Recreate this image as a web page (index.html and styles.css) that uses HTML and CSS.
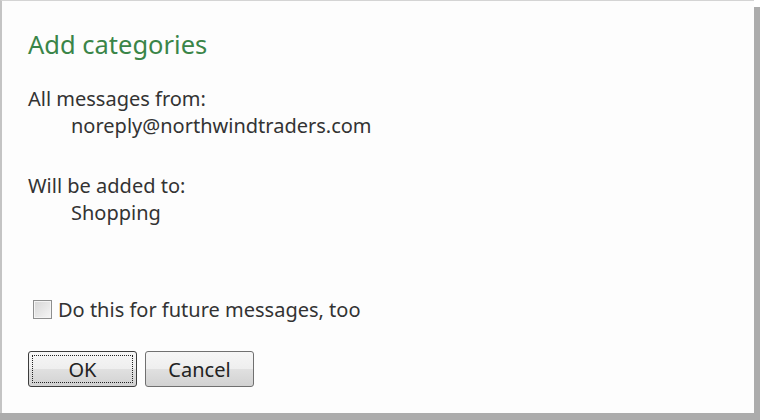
FILE: index.html
```html
<!DOCTYPE html>
<html>
<head>
<meta charset="utf-8">
<link rel="stylesheet" href="styles.css">
</head>
<body>
<div class="dialog">
  <h1 class="title">Add categories</h1>
  <div class="section">
    <div class="label">All messages from:</div>
    <div class="value">noreply@northwindtraders.com</div>
  </div>
  <div class="section second">
    <div class="label">Will be added to:</div>
    <div class="value">Shopping</div>
  </div>
  <label class="check-row">
    <span class="checkbox"></span>
    <span>Do this for future messages, too</span>
  </label>
  <div class="buttons">
    <button class="btn btn-default"><span class="focus">OK</span></button>
    <button class="btn">Cancel</button>
  </div>
</div>
</body>
</html>
```

FILE: styles.css
```css
html, body {
  margin: 0;
  padding: 0;
  background: #ffffff;
}
body {
  width: 760px;
  height: 420px;
  overflow: hidden;
  font-family: "Noto Sans", "Open Sans", sans-serif;
  color: #333333;
}
.dialog {
  box-sizing: border-box;
  width: 754px;
  height: 413px;
  background: #fdfdfd;
  border-left: 2px solid #c4c4c4;
  border-top: 1px solid #d4d4d4;
  box-shadow: 6px 7px 0 #acacac, 0 7px 0 #acacac;
  padding: 27px 0 0 26px;
  display: flex;
  flex-direction: column;
}
.title {
  margin: 0;
  font-weight: normal;
  font-size: 25.5px;
  line-height: 32px;
  color: #3a8548;
}
.section {
  margin-top: 25px;
  font-size: 20px;
  line-height: 27px;
}
.section.second {
  margin-top: 33px;
}
.value {
  padding-left: 43px;
}
.check-row {
  margin-top: 70px;
  display: flex;
  align-items: center;
  gap: 6px;
  font-size: 20px;
  line-height: 27px;
  padding-left: 5px;
}
.checkbox {
  width: 17px;
  height: 17px;
  border: 1px solid #8e8f8f;
  background: linear-gradient(135deg, #d6d6d6, #f6f6f6);
  box-shadow: inset 0 0 0 1px #f4f4f4;
}
.buttons {
  margin-top: 28px;
  display: flex;
  gap: 8px;
}
.btn {
  box-sizing: border-box;
  width: 109px;
  height: 36px;
  border: 1px solid #707070;
  border-radius: 3px;
  background: linear-gradient(#f6f6f6 0%, #eeeeee 50%, #e0e0e0 51%, #d2d2d2 100%);
  font-family: "Noto Sans", "Open Sans", sans-serif;
  font-size: 20px;
  color: #222222;
  padding: 0;
  display: flex;
  align-items: center;
  justify-content: center;
}
.btn-default {
  border-color: #3c3c3c;
  padding: 3px;
}
.focus {
  flex: 1;
  align-self: stretch;
  display: flex;
  align-items: center;
  justify-content: center;
  border: 1px dotted #222222;
}
```
